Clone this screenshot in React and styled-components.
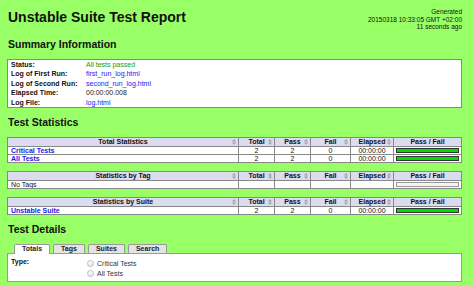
import styled, { createGlobalStyle } from "styled-components";

const GlobalStyle = createGlobalStyle`
  html, body {
    margin: 0;
    padding: 0;
  }
  body {
    background: #99ff66;
    font-family: "Liberation Sans", Arial, Helvetica, sans-serif;
    color: #111;
  }
`;

const Page = styled.div`
  width: 455px;
  padding: 0 12px 4px 7px;
`;

const Header = styled.header`
  display: flex;
  justify-content: space-between;
  align-items: flex-start;
  padding-top: 8px;
`;

const Title = styled.h1`
  margin: 1px 0 0 1px;
  font-size: 14px;
  line-height: 16px;
  font-weight: bold;
`;

const Generated = styled.div`
  text-align: right;
  font-size: 6.5px;
  line-height: 7.5px;
`;

const SectionTitle = styled.h2`
  margin: ${(p) => p.$top || 8}px 0 9px 1px;
  font-size: 10.5px;
  line-height: 12px;
  font-weight: bold;
`;

const SummaryBox = styled.div`
  background: #fff;
  border: 1px solid #888;
  padding: 0 3px;
`;

const SummaryRow = styled.div`
  display: grid;
  grid-template-columns: 75px 1fr;
  height: 9.6px;
  line-height: 9.6px;
  font-size: 7px;
`;

const Label = styled.span`
  font-weight: bold;
`;

const Value = styled.span`
  color: ${(p) => p.$color || "#222"};
`;

const Link = styled.a`
  color: #1a1aee;
  text-decoration: none;
  font-weight: ${(p) => (p.$bold ? "bold" : "normal")};
`;

const StatTable = styled.table`
  width: 455px;
  table-layout: fixed;
  border-collapse: collapse;
  background: #fff;
  border: 1px solid #888;
  margin-bottom: 8px;
  font-size: 7px;
`;

const Th = styled.th`
  height: 8px;
  padding: 0;
  line-height: 8px;
  background: #dcdcf0;
  border: 1px solid #888;
  font-weight: bold;
  width: ${(p) => (p.$w ? `${p.$w}px` : "auto")};
`;

const HeadInner = styled.div`
  display: grid;
  grid-template-columns: 1fr auto 1fr;
  align-items: center;
`;

const SortMark = styled.svg`
  justify-self: end;
  margin-right: 2px;
  width: 4px;
  height: 6px;
`;

const Td = styled.td`
  height: 7px;
  padding: 0 ${(p) => (p.$left ? "3px" : "0")};
  line-height: 7px;
  border: 1px solid #888;
  text-align: ${(p) => (p.$left ? "left" : "center")};
  white-space: nowrap;
  overflow: hidden;
`;

const Bar = styled.div`
  height: 5px;
  margin: 0 2px;
  box-sizing: border-box;
  border: 1px solid ${(p) => (p.$empty ? "#999" : "#333")};
  background: ${(p) => (p.$empty ? "#f4f4f4" : "#00dd00")};
`;

const TabList = styled.ul`
  display: flex;
  gap: 3px;
  margin: 0;
  padding: 0 0 0 7px;
  list-style: none;
`;

const Tab = styled.li`
  position: relative;
  height: 8px;
  line-height: 8px;
  padding: 0 7px;
  margin-bottom: -1px;
  border: 1px solid #999;
  border-bottom: none;
  border-radius: 2px 2px 0 0;
  background: ${(p) => (p.$active ? "#fff" : "#e4e4e4")};
  font-size: 7px;
  font-weight: bold;
  color: #222;
  padding-bottom: ${(p) => (p.$active ? "1px" : "0")};
`;

const Panel = styled.div`
  display: grid;
  grid-template-columns: 75px 1fr;
  height: 27px;
  padding: 4px 3px 0;
  box-sizing: border-box;
  height: 29px;
  background: #fff;
  border: 1px solid #999;
  font-size: 7px;
`;

const TypeLabel = styled.span`
  font-weight: bold;
  line-height: 7px;
`;

const RadioList = styled.div`
  display: flex;
  flex-direction: column;
`;

const RadioRow = styled.label`
  display: flex;
  align-items: center;
  gap: 3.5px;
  height: 10px;
  color: #333;
`;

const Radio = styled.input`
  appearance: none;
  margin: 0 0 0 0.5px;
  width: 7px;
  height: 7px;
  border: 1px solid #bbb;
  border-radius: 50%;
  background: linear-gradient(#fff, #e8e8e8);
`;

const Sort = () => (
  <SortMark viewBox="0 0 4 6">
    <path d="M2 0 L4 2.4 L0 2.4Z M0 3.6 L4 3.6 L2 6Z" fill="#a0a0a0" />
  </SortMark>
);

const cols = [
  { key: "Total", w: 35 },
  { key: "Pass", w: 35 },
  { key: "Fail", w: 39 },
  { key: "Elapsed", w: 42 },
];

const StatsBlock = ({ title, rows, empty }) => (
  <StatTable>
    <thead>
      <tr>
        <Th>
          <HeadInner>
            <span />
            {title}
            <Sort />
          </HeadInner>
        </Th>
        {cols.map((c) => (
          <Th key={c.key} $w={c.w}>
            <HeadInner>
              <span />
              {c.key}
              <Sort />
            </HeadInner>
          </Th>
        ))}
        <Th $w={67}>Pass / Fail</Th>
      </tr>
    </thead>
    <tbody>
      {rows.map((r) => (
        <tr key={r.name}>
          <Td $left>
            {r.link ? (
              <Link href="#" $bold>
                {r.name}
              </Link>
            ) : (
              r.name
            )}
          </Td>
          <Td>{r.total}</Td>
          <Td>{r.pass}</Td>
          <Td>{r.fail}</Td>
          <Td>{r.elapsed}</Td>
          <Td>
            <Bar $empty={empty} />
          </Td>
        </tr>
      ))}
    </tbody>
  </StatTable>
);

const App = () => (
  <Page>
    <GlobalStyle />
    <Header>
      <Title>Unstable Suite Test Report</Title>
      <Generated>
        Generated
        <br />
        20150318 10:33:05 GMT +02:00
        <br />
        11 seconds ago
      </Generated>
    </Header>

    <SectionTitle $top={7}>Summary Information</SectionTitle>
    <SummaryBox>
      <SummaryRow>
        <Label>Status:</Label>
        <Value $color="#119911">All tests passed</Value>
      </SummaryRow>
      <SummaryRow>
        <Label>Log of First Run:</Label>
        <Link href="#">first_run_log.html</Link>
      </SummaryRow>
      <SummaryRow>
        <Label>Log of Second Run:</Label>
        <Link href="#">second_run_log.html</Link>
      </SummaryRow>
      <SummaryRow>
        <Label>Elapsed Time:</Label>
        <Value>00:00:00.008</Value>
      </SummaryRow>
      <SummaryRow>
        <Label>Log File:</Label>
        <Link href="#">log.html</Link>
      </SummaryRow>
    </SummaryBox>

    <SectionTitle>Test Statistics</SectionTitle>
    <StatsBlock
      title="Total Statistics"
      rows={[
        { name: "Critical Tests", link: true, total: 2, pass: 2, fail: 0, elapsed: "00:00:00" },
        { name: "All Tests", link: true, total: 2, pass: 2, fail: 0, elapsed: "00:00:00" },
      ]}
    />
    <StatsBlock
      title="Statistics by Tag"
      empty
      rows={[{ name: "No Tags", total: "", pass: "", fail: "", elapsed: "" }]}
    />
    <StatsBlock
      title="Statistics by Suite"
      rows={[
        { name: "Unstable Suite", link: true, total: 2, pass: 2, fail: 0, elapsed: "00:00:00" },
      ]}
    />

    <SectionTitle $top={1}>Test Details</SectionTitle>
    <TabList>
      <Tab $active>Totals</Tab>
      <Tab>Tags</Tab>
      <Tab>Suites</Tab>
      <Tab>Search</Tab>
    </TabList>
    <Panel>
      <TypeLabel>Type:</TypeLabel>
      <RadioList>
        <RadioRow>
          <Radio type="radio" name="type" />
          Critical Tests
        </RadioRow>
        <RadioRow>
          <Radio type="radio" name="type" />
          All Tests
        </RadioRow>
      </RadioList>
    </Panel>
  </Page>
);

export default App;
